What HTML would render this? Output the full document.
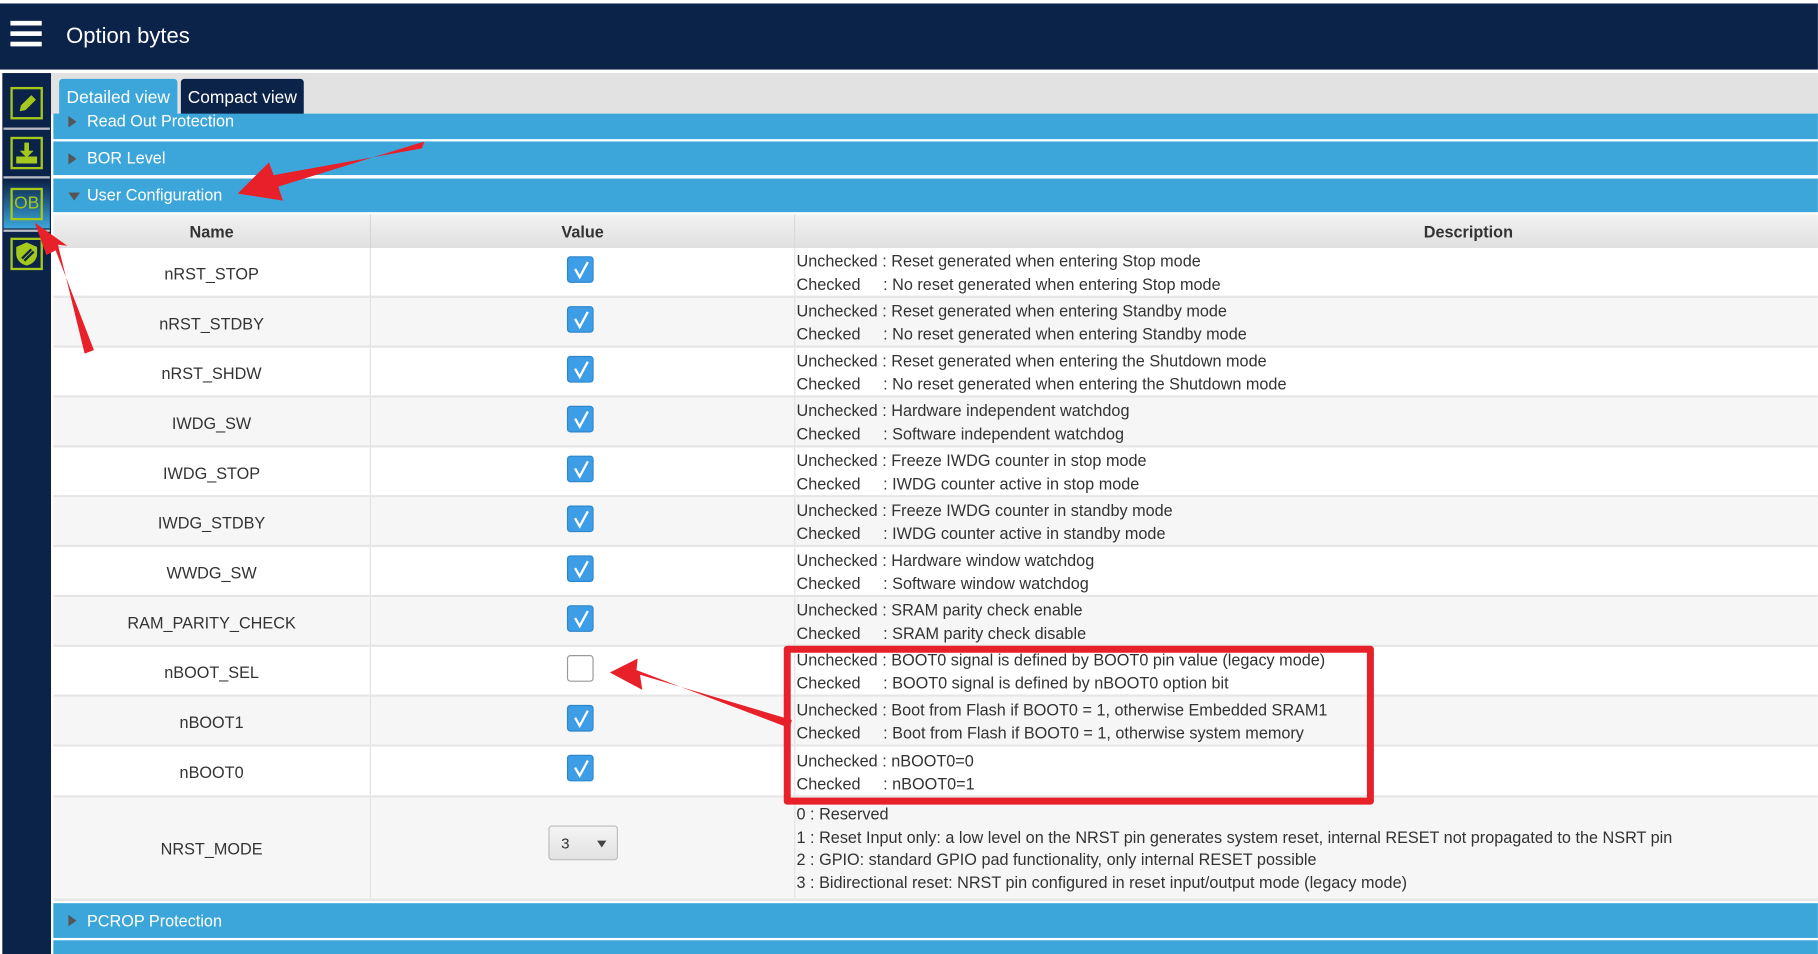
<!DOCTYPE html>
<html><head><meta charset="utf-8"><style>
*{margin:0;padding:0;box-sizing:border-box}
html,body{width:1818px;height:954px;overflow:hidden;background:#fff;font-family:"Liberation Sans",sans-serif}
#w{position:absolute;left:0;top:0;width:1568px;height:823px;transform:scale(1.1594);transform-origin:0 0;overflow:hidden;background:#fff}
.a{position:absolute}
.top{left:0;top:3px;width:1568px;height:57px;background:#0b2249}
.ham{left:9px;width:27px;height:4px;background:#fff}
.title{left:57px;top:21px;color:#fff;font-size:19px}
.side{left:2px;top:63px;width:42px;height:760px;background:#0b2249}
.ic{left:9px;width:28px;height:28px;border:2px solid #a4c81c}
.sep{left:3px;width:40px;height:2px;background:#b8bcc4}
.tabbar{left:44px;top:63px;width:1524px;height:36px;background:#e2e2e2}
.tab{top:68px;height:31px;font-size:15px;color:#fff;padding:8px 0 0 0;text-align:center;border-radius:3px 3px 0 0}
.sec{left:46px;width:1522px;background:#3ca6da;color:#fff;font-size:14px}
.sec span{position:absolute;left:29px}
.tri{position:absolute;left:13px;width:0;height:0}
.th{top:185px;height:29px;background:linear-gradient(#f2f2f2,#e0e0e0);font-weight:bold;font-size:14px;color:#333;text-align:center;padding-top:7px;border-right:1px solid #d4d4d4}
.row{left:46px;width:1522px;border-bottom:2px solid #e6e6e6}
.nm{position:absolute;left:0;width:274px;text-align:center;font-size:14px;color:#333;border-right:1px solid #e2e2e2;height:100%}
.vl{position:absolute;left:274px;width:366px;height:100%;border-right:1px solid #e2e2e2}
.ds{position:absolute;left:641px;font-size:14px;color:#333;line-height:19.5px;white-space:pre}
.cb{position:absolute;left:169px;width:23px;height:23px;border-radius:3px;background:#3d9de6;border:1px solid #2c86cc}
.cb svg{position:absolute;left:3px;top:2px}
.cbe{background:#fff;border:1px solid #999}
</style></head><body><div id="w">
<div class="a top"></div>
<div class="a ham" style="top:18px"></div><div class="a ham" style="top:27px"></div><div class="a ham" style="top:36px"></div>
<div class="a title">Option bytes</div>
<div class="a side"></div>
<div class="a" style="left:3px;top:155px;width:40px;height:42px;background:linear-gradient(#0b2249,#3ca6da)"></div>
<div class="a ic" style="top:75px"><svg width="24" height="24" viewBox="0 0 24 24"><path d="M6 19l1-5 9-9 4 4-9 9z" fill="#a4c81c"/></svg></div>
<div class="a sep" style="top:110px"></div>
<div class="a ic" style="top:118px"><svg width="24" height="24" viewBox="0 0 24 24"><path d="M10 3h4v7h4l-6 6-6-6h4z M3 15h18v6H3z" fill="#a4c81c"/></svg></div>
<div class="a sep" style="top:152px"></div>
<div class="a ic" style="top:162px;color:#a4c81c;font-size:15px;text-align:center;line-height:24px">OB</div>
<div class="a sep" style="top:198px"></div>
<div class="a ic" style="top:205px"><svg width="24" height="24" viewBox="0 0 24 24"><path d="M12 2l9 4v6c0 5-4 9-9 10C7 21 3 17 3 12V6z" fill="#a4c81c"/><path d="M8 16l8-8M10 18l8-8" stroke="#0b2249" stroke-width="2"/></svg></div>
<div class="a tabbar"></div>
<div class="a tab" style="left:51px;width:102px;background:#3ca6da">Detailed view</div>
<div class="a tab" style="left:156px;width:106px;background:#0b2249">Compact view</div>
<div class="a sec" style="top:98px;height:22px"><div class="tri" style="top:2px;border-left:7px solid #555;border-top:5px solid transparent;border-bottom:5px solid transparent"></div><span style="top:-2px">Read Out Protection</span></div>
<div class="a sec" style="top:122px;height:29px"><div class="tri" style="top:10px;border-left:7px solid #555;border-top:5px solid transparent;border-bottom:5px solid transparent"></div><span style="top:6px">BOR Level</span></div>
<div class="a sec" style="top:154px;height:29px"><div class="tri" style="top:12px;border-top:7px solid #555;border-left:5px solid transparent;border-right:5px solid transparent"></div><span style="top:6px">User Configuration</span></div>
<div class="a th" style="left:46px;width:274px">Name</div>
<div class="a th" style="left:320px;width:366px">Value</div>
<div class="a th" style="left:686px;width:1162px">Description</div>
<div class="a sec" style="top:779px;height:30px"><div class="tri" style="top:10px;border-left:7px solid #555;border-top:5px solid transparent;border-bottom:5px solid transparent"></div><span style="top:7px">PCROP Protection</span></div>
<div class="a sec" style="top:811px;height:20px"></div>
<div class="a row" style="top:214px;height:43px;background:#fff"><div class="nm" style="padding-top:14px">nRST_STOP</div><div class="vl"><div class="cb" style="top:7px"><svg width="16" height="17"><path d="M3 8l4 7 7-13" stroke="#fff" stroke-width="2" fill="none"/></svg></div></div><div class="ds" style="top:2px">Unchecked : Reset generated when entering Stop mode
Checked     : No reset generated when entering Stop mode</div></div>
<div class="a row" style="top:257px;height:43px;background:#f6f6f6"><div class="nm" style="padding-top:14px">nRST_STDBY</div><div class="vl"><div class="cb" style="top:7px"><svg width="16" height="17"><path d="M3 8l4 7 7-13" stroke="#fff" stroke-width="2" fill="none"/></svg></div></div><div class="ds" style="top:2px">Unchecked : Reset generated when entering Standby mode
Checked     : No reset generated when entering Standby mode</div></div>
<div class="a row" style="top:300px;height:43px;background:#fff"><div class="nm" style="padding-top:14px">nRST_SHDW</div><div class="vl"><div class="cb" style="top:7px"><svg width="16" height="17"><path d="M3 8l4 7 7-13" stroke="#fff" stroke-width="2" fill="none"/></svg></div></div><div class="ds" style="top:2px">Unchecked : Reset generated when entering the Shutdown mode
Checked     : No reset generated when entering the Shutdown mode</div></div>
<div class="a row" style="top:343px;height:43px;background:#f6f6f6"><div class="nm" style="padding-top:14px">IWDG_SW</div><div class="vl"><div class="cb" style="top:7px"><svg width="16" height="17"><path d="M3 8l4 7 7-13" stroke="#fff" stroke-width="2" fill="none"/></svg></div></div><div class="ds" style="top:2px">Unchecked : Hardware independent watchdog
Checked     : Software independent watchdog</div></div>
<div class="a row" style="top:386px;height:43px;background:#fff"><div class="nm" style="padding-top:14px">IWDG_STOP</div><div class="vl"><div class="cb" style="top:7px"><svg width="16" height="17"><path d="M3 8l4 7 7-13" stroke="#fff" stroke-width="2" fill="none"/></svg></div></div><div class="ds" style="top:2px">Unchecked : Freeze IWDG counter in stop mode
Checked     : IWDG counter active in stop mode</div></div>
<div class="a row" style="top:429px;height:43px;background:#f6f6f6"><div class="nm" style="padding-top:14px">IWDG_STDBY</div><div class="vl"><div class="cb" style="top:7px"><svg width="16" height="17"><path d="M3 8l4 7 7-13" stroke="#fff" stroke-width="2" fill="none"/></svg></div></div><div class="ds" style="top:2px">Unchecked : Freeze IWDG counter in standby mode
Checked     : IWDG counter active in standby mode</div></div>
<div class="a row" style="top:472px;height:43px;background:#fff"><div class="nm" style="padding-top:14px">WWDG_SW</div><div class="vl"><div class="cb" style="top:7px"><svg width="16" height="17"><path d="M3 8l4 7 7-13" stroke="#fff" stroke-width="2" fill="none"/></svg></div></div><div class="ds" style="top:2px">Unchecked : Hardware window watchdog
Checked     : Software window watchdog</div></div>
<div class="a row" style="top:515px;height:43px;background:#f6f6f6"><div class="nm" style="padding-top:14px">RAM_PARITY_CHECK</div><div class="vl"><div class="cb" style="top:7px"><svg width="16" height="17"><path d="M3 8l4 7 7-13" stroke="#fff" stroke-width="2" fill="none"/></svg></div></div><div class="ds" style="top:2px">Unchecked : SRAM parity check enable
Checked     : SRAM parity check disable</div></div>
<div class="a row" style="top:558px;height:43px;background:#fff"><div class="nm" style="padding-top:14px">nBOOT_SEL</div><div class="vl"><div class="cb cbe" style="top:7px"></div></div><div class="ds" style="top:2px">Unchecked : BOOT0 signal is defined by BOOT0 pin value (legacy mode)
Checked     : BOOT0 signal is defined by nBOOT0 option bit</div></div>
<div class="a row" style="top:601px;height:43px;background:#f6f6f6"><div class="nm" style="padding-top:14px">nBOOT1</div><div class="vl"><div class="cb" style="top:7px"><svg width="16" height="17"><path d="M3 8l4 7 7-13" stroke="#fff" stroke-width="2" fill="none"/></svg></div></div><div class="ds" style="top:2px">Unchecked : Boot from Flash if BOOT0 = 1, otherwise Embedded SRAM1
Checked     : Boot from Flash if BOOT0 = 1, otherwise system memory</div></div>
<div class="a row" style="top:644px;height:44px;background:#fff"><div class="nm" style="padding-top:14px">nBOOT0</div><div class="vl"><div class="cb" style="top:7px"><svg width="16" height="17"><path d="M3 8l4 7 7-13" stroke="#fff" stroke-width="2" fill="none"/></svg></div></div><div class="ds" style="top:3px">Unchecked : nBOOT0=0
Checked     : nBOOT0=1</div></div>
<div class="a row" style="top:688px;height:89px;background:#f6f6f6"><div class="nm" style="padding-top:36px">NRST_MODE</div><div class="vl"><div style="position:absolute;left:153px;top:24px;width:60px;height:30px;border:1px solid #bbb;border-radius:3px;background:linear-gradient(#f4f4f4,#e2e2e2);font-size:13px;color:#333;padding:7px 0 0 10px">3<div style="position:absolute;left:41px;top:12px;border-top:6px solid #444;border-left:4px solid transparent;border-right:4px solid transparent"></div></div></div><div class="ds" style="top:5px">0 : Reserved
1 : Reset Input only: a low level on the NRST pin generates system reset, internal RESET not propagated to the NSRT pin
2 : GPIO: standard GPIO pad functionality, only internal RESET possible
3 : Bidirectional reset: NRST pin configured in reset input/output mode (legacy mode)</div></div>
<div class="a" style="left:676px;top:557px;width:509px;height:137px;border:6px solid #e8202a;border-radius:3px"></div>
<svg class="a" style="left:0;top:0" width="1568" height="823">
<polygon points="366,122 240,161 244,173 205,167 232,140 236,151 364,128" fill="#e8202a"/>
<polygon points="81,302 48,216 40,220 30,192 58,212 50,211 73,305" fill="#e8202a"/>
<polygon points="683,621 552,582 554,595 526,580 550,568 549,578 681,628" fill="#e8202a"/>
</svg>
</div></body></html>
